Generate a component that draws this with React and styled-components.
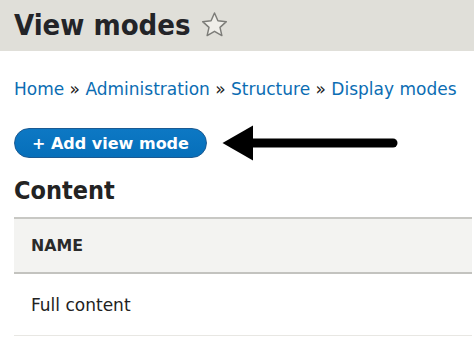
import styled, { createGlobalStyle } from "styled-components";

const GlobalStyle = createGlobalStyle`
  body {
    margin: 0;
    background: #fff;
    color: #222;
    font-family: "DejaVu Sans", "Liberation Sans", sans-serif;
  }
`;

const crumbs = ["Home", "Administration", "Structure", "Display modes"];

export default function App() {
  return (
    <>
      <GlobalStyle />
      <PageHeader>
        <Title>View modes</Title>
        <StarIcon />
      </PageHeader>

      <Main>
        <Breadcrumb>
          {crumbs.map((c, i) => (
            <span key={c}>
              {i > 0 && <Sep> » </Sep>}
              <Crumb href="#">{c}</Crumb>
            </span>
          ))}
        </Breadcrumb>

        <ActionRow>
          <AddButton>+ Add view mode</AddButton>
          <Arrow />
        </ActionRow>

        <SectionTitle>Content</SectionTitle>

        <Table>
          <thead>
            <tr>
              <Th>Name</Th>
            </tr>
          </thead>
          <tbody>
            <tr>
              <Td>Full content</Td>
            </tr>
          </tbody>
        </Table>
      </Main>
    </>
  );
}

function StarIcon() {
  return (
    <svg width="27" height="27" viewBox="0 0 26 26">
      <polygon
        points="13,1 16.3,8.5 24.4,9.3 18.3,14.8 20.1,22.7 13,18.6 5.9,22.7 7.7,14.8 1.6,9.3 9.7,8.5"
        fill="#efeee9"
        stroke="#7c7c78"
        strokeWidth="1.4"
        strokeLinejoin="round"
      />
    </svg>
  );
}

function Arrow() {
  return (
    <svg width="176" height="36" viewBox="0 0 176 36">
      <polygon points="0.5,18 31,0.5 31,35.5" fill="#000" />
      <line x1="28" y1="18" x2="171" y2="18" stroke="#000" strokeWidth="9" strokeLinecap="round" />
    </svg>
  );
}

const PageHeader = styled.header`
  height: 51px;
  box-sizing: border-box;
  padding: 0 14px;
  background: #e0dfd9;
  display: flex;
  align-items: center;
  gap: 10px;
`;

const Title = styled.h1`
  margin: 0;
  font-family: "DejaVu Sans Condensed", "DejaVu Sans", sans-serif;
  font-size: 29px;
  font-weight: 700;
  line-height: 51px;
  color: #232428;
`;

const Main = styled.main`
  padding: 0 2px 0 14px;
`;

const Breadcrumb = styled.nav`
  margin-top: 28px;
  font-size: 17px;
  line-height: 20px;
  white-space: nowrap;
`;

const Crumb = styled.a`
  color: #0b6db3;
  text-decoration: none;
`;

const Sep = styled.span`
  color: #222;
`;

const ActionRow = styled.div`
  margin-top: 26px;
  height: 36px;
  display: flex;
  align-items: center;
  gap: 15px;
`;

const AddButton = styled.button`
  height: 30px;
  box-sizing: border-box;
  padding: 0 17px;
  border: 1px solid #1b5a92;
  border-radius: 15px;
  background: linear-gradient(#0d78c4, #066fba);
  color: #fff;
  font-family: "DejaVu Sans", sans-serif;
  font-size: 16px;
  font-weight: 700;
  white-space: nowrap;
`;

const SectionTitle = styled.h2`
  margin: 15px 0 11px;
  font-family: "DejaVu Sans Condensed", "DejaVu Sans", sans-serif;
  font-size: 25px;
  font-weight: 700;
  line-height: 30px;
  color: #232323;
`;

const Table = styled.table`
  width: 100%;
  border-collapse: collapse;
`;

const Th = styled.th`
  height: 53px;
  padding: 0 17px;
  background: #f3f3f1;
  border-top: 2px solid #c8c8c4;
  border-bottom: 2px solid #c3c3bf;
  text-align: left;
  text-transform: uppercase;
  font-size: 15.8px;
  font-weight: 700;
  color: #2a2a2a;
`;

const Td = styled.td`
  height: 61px;
  padding: 0 17px;
  border-bottom: 1px solid #e8e7e3;
  font-size: 17px;
  color: #222;
`;
